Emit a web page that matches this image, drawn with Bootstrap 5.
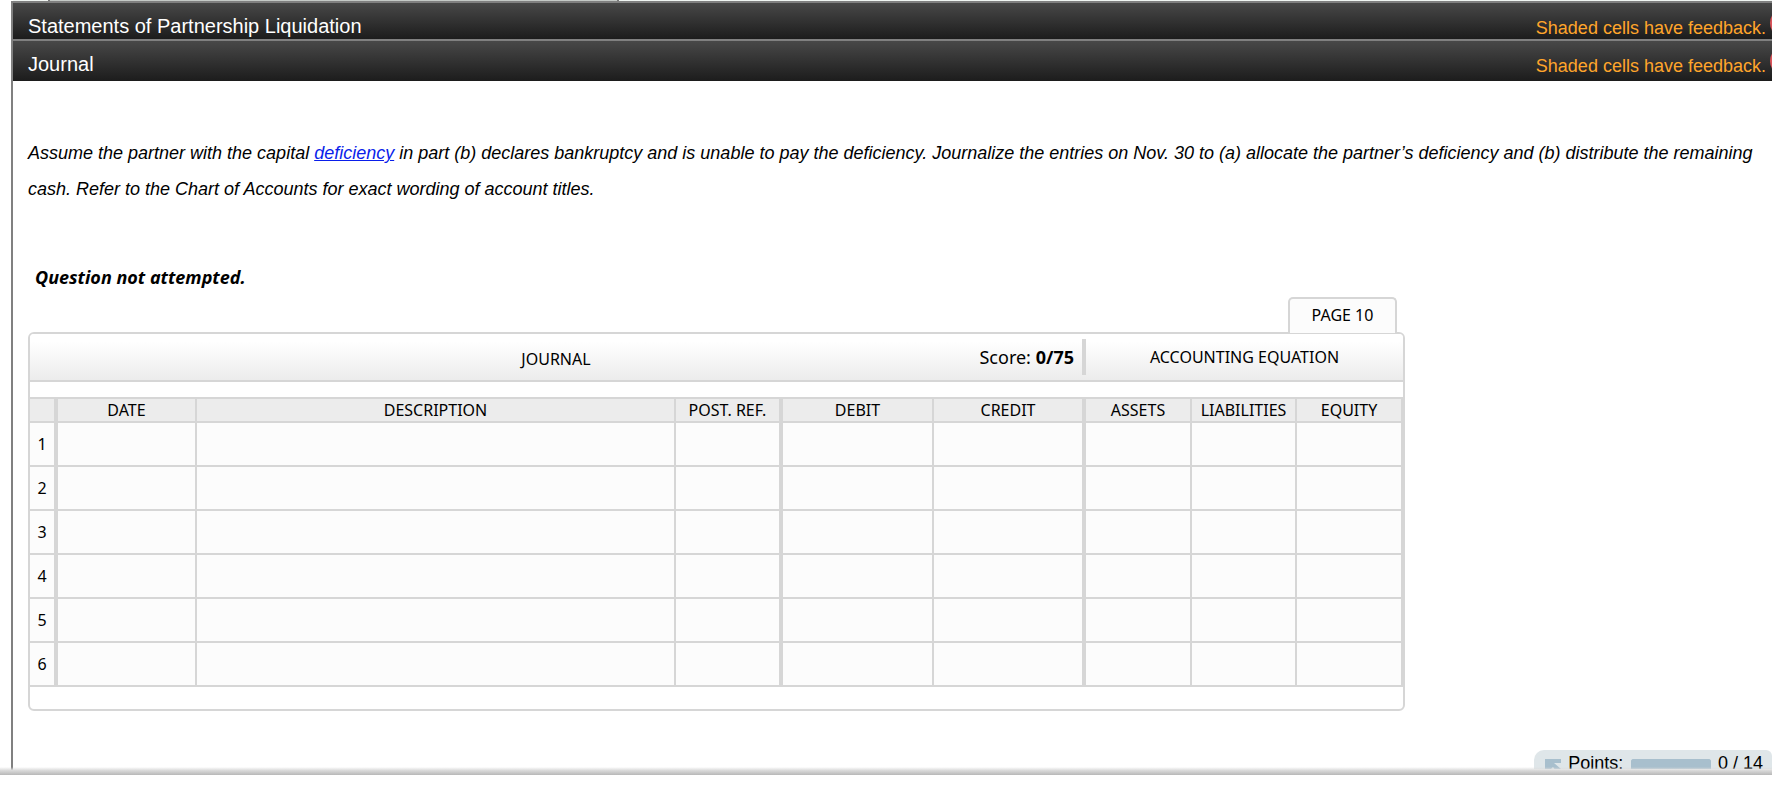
<!DOCTYPE html>
<html lang="en">
<head>
<meta charset="utf-8">
<meta name="viewport" content="width=device-width, initial-scale=1">
<title>Statements of Partnership Liquidation</title>
<link rel="stylesheet" href="https://cdn.jsdelivr.net/npm/bootstrap@5.3.0/dist/css/bootstrap.min.css">
<style>
  :root { --rule: #d6d6d6; }
  body { font-family: "Liberation Sans", Arial, sans-serif; font-size: 18px; color: #000; background: #fff; }
  .viewport-pane { height: calc(100vh - 13px); position: relative; }
  .pane-shadow { position: absolute; left: 0; right: 0; bottom: 0; height: 8px; background: linear-gradient(rgba(255,255,255,0), #dcdcdc 40%, #b8b8b8); }
  .top-strip { height: 1px; margin-left: 13px; background: #f0f5f2; }
  .top-strip div { width: 571px; margin-left: 35px; height: 1px; background: #c4c9c6; border: solid #777; border-width: 0 2px; }
  .sheet { border-left: 2px solid #808080; margin-left: 11px; }
  .section-bar { border-top: 2px solid #808080; background: linear-gradient(#484848, #1c1c1c); color: #fff; padding-left: 15px; line-height: 24px; }
  .section-bar h2 { font-size: 20px; line-height: 24px; padding-top: 11px; }
  .section-bar span { color: #ffa52b; line-height: 22px; padding-top: 14px; }
  .bar-one { height: 38px; }
  .bar-two { height: 42px; }
  .dot { width: 30px; height: 30px; background: #d9555b; margin: 5px -28px 0 0; }
  .directions { line-height: 36px; margin: 54px 0 0; padding: 0 15px; }
  .directions a { color: #0a1eea; }
  .humanist { font-family: "Noto Sans", sans-serif; font-size: 16px; }
  .attempt { font-size: 18px; line-height: 24px; margin: 58px 0 8px 22px; }
  .journal { max-width: 1377px; margin-left: 15px; }
  .page-tab { width: 109px; height: 36px; line-height: 33px; margin: 0 8px -1px auto; border: 2px solid var(--rule); border-bottom: 0; border-radius: 5px 5px 0 0; background: #fcfcfc; position: relative; }
  .panel { border: 2px solid var(--rule); border-radius: 6px; padding-bottom: 22px; }
  .panel-head { height: 48px; border-bottom: 2px solid var(--rule); margin-bottom: 15px; background: linear-gradient(#fff 15%, #ececec); border-radius: 4px 4px 0 0; }
  .panel-title { padding-left: 110px; }
  .equation { width: 321px; height: 36px; border-left: 4px solid var(--rule); }
  .score { width: 110px; font-size: 18px; }
  .ledger { table-layout: fixed; width: 100%; border-collapse: separate; border-spacing: 0; border-top: 2px solid var(--rule); }
  .ledger th, .ledger td { border: solid var(--rule); border-width: 0 2px 2px 0; padding: 0; font-weight: 400; text-align: center; white-space: nowrap; }
  .ledger thead th { background: #ececec; height: 24px; line-height: 22px; }
  .ledger tbody th, .ledger tbody td { background: #fcfcfc; height: 44px; line-height: 42px; }
  .ledger .wide { border-right-width: 4px; }
  .points { position: absolute; right: 0; bottom: 6px; width: 238px; height: 19px; overflow: hidden; background: #dfe6e9; border-radius: 10px 6px 0 0; padding: 4px 9px 0 11px; line-height: 18px; }
  .points progress { appearance: none; width: 80px; height: 20px; margin-top: 5px; border: 0; border-radius: 3px; background: #a8bfcd; }
  .points progress::-webkit-progress-bar { background: #a8bfcd; border-radius: 3px; }
  .points svg { margin-top: 5px; }
</style>
</head>
<body class="overflow-hidden">
<div class="viewport-pane overflow-hidden">
  <div class="top-strip"><div></div></div>
  <main class="sheet h-100">
    <header class="section-bar bar-one d-flex justify-content-between">
      <h2 class="fw-normal m-0">Statements of Partnership Liquidation</h2>
      <div class="d-flex align-items-start gap-1"><span>Shaded cells have feedback.</span><i class="dot rounded-circle"></i></div>
    </header>
    <header class="section-bar bar-two d-flex justify-content-between">
      <h2 class="fw-normal m-0">Journal</h2>
      <div class="d-flex align-items-start gap-1"><span>Shaded cells have feedback.</span><i class="dot rounded-circle"></i></div>
    </header>
    <p class="directions fst-italic">Assume the partner with the capital <a href="#">deficiency</a> in part (b) declares bankruptcy and is unable to pay the deficiency. Journalize the entries on Nov. 30 to (a) allocate the partner’s deficiency and (b) distribute the remaining cash. Refer to the Chart of Accounts for exact wording of account titles.</p>
    <p class="attempt humanist fw-bold fst-italic">Question not attempted.</p>
    <section class="journal humanist">
      <div class="page-tab text-center">PAGE 10</div>
      <div class="panel">
        <div class="panel-head d-flex align-items-center">
          <div class="panel-title flex-grow-1 text-center pt-1">JOURNAL</div>
          <div class="score text-end pe-2">Score: <b>0/75</b></div>
          <div class="equation d-flex align-items-center justify-content-center">ACCOUNTING EQUATION</div>
        </div>
        <table class="ledger">
          <colgroup><col style="width:28px"><col style="width:139px"><col><col style="width:107px"><col style="width:151px"><col style="width:152px"><col style="width:106px"><col style="width:105px"><col style="width:106px"></colgroup>
          <thead><tr><th class="wide"></th><th>DATE</th><th>DESCRIPTION</th><th class="wide">POST. REF.</th><th>DEBIT</th><th class="wide">CREDIT</th><th>ASSETS</th><th>LIABILITIES</th><th>EQUITY</th></tr></thead>
          <tbody>
            <tr><th class="wide">1</th><td></td><td></td><td class="wide"></td><td></td><td class="wide"></td><td></td><td></td><td></td></tr>
            <tr><th class="wide">2</th><td></td><td></td><td class="wide"></td><td></td><td class="wide"></td><td></td><td></td><td></td></tr>
            <tr><th class="wide">3</th><td></td><td></td><td class="wide"></td><td></td><td class="wide"></td><td></td><td></td><td></td></tr>
            <tr><th class="wide">4</th><td></td><td></td><td class="wide"></td><td></td><td class="wide"></td><td></td><td></td><td></td></tr>
            <tr><th class="wide">5</th><td></td><td></td><td class="wide"></td><td></td><td class="wide"></td><td></td><td></td><td></td></tr>
            <tr><th class="wide">6</th><td></td><td></td><td class="wide"></td><td></td><td class="wide"></td><td></td><td></td><td></td></tr>
          </tbody>
        </table>
      </div>
    </section>
  </main>
  <aside class="points d-flex align-items-start justify-content-between">
    <svg width="16" height="16" viewBox="0 0 16 16" class="flex-shrink-0" aria-hidden="true"><path fill="#a8bfcd" d="M0 0h16v4H9l7 6v6h-2L8 8l-4 4v4H0z"/></svg>
    <label for="pts">Points:</label><progress id="pts" value="0" max="14"></progress><span>0 / 14</span>
  </aside>
  <div class="pane-shadow"></div>
</div>
<script src="https://cdn.jsdelivr.net/npm/bootstrap@5.3.0/dist/js/bootstrap.bundle.min.js"></script>
</body>
</html>
